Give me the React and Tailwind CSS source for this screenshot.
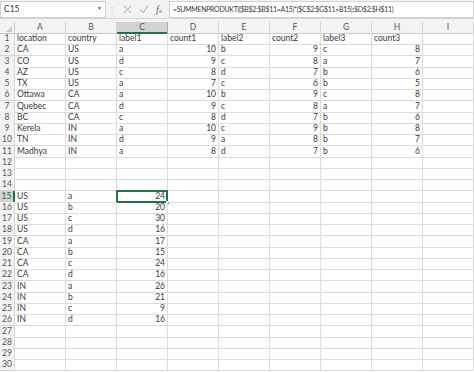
import React from 'react';

const COLS = ['A', 'B', 'C', 'D', 'E', 'F', 'G', 'H', 'I'];

const TOP = [
  ['location', 'country', 'label1', 'count1', 'label2', 'count2', 'label3', 'count3'],
  ['CA', 'US', 'a', 10, 'b', 9, 'c', 8],
  ['CO', 'US', 'd', 9, 'c', 8, 'a', 7],
  ['AZ', 'US', 'c', 8, 'd', 7, 'b', 6],
  ['TX', 'US', 'a', 7, 'c', 6, 'b', 5],
  ['Ottawa', 'CA', 'a', 10, 'b', 9, 'c', 8],
  ['Quebec', 'CA', 'd', 9, 'c', 8, 'a', 7],
  ['BC', 'CA', 'c', 8, 'd', 7, 'b', 6],
  ['Kerela', 'IN', 'a', 10, 'c', 9, 'b', 8],
  ['TN', 'IN', 'd', 9, 'a', 8, 'b', 7],
  ['Madhya', 'IN', 'a', 8, 'd', 7, 'b', 6],
];

const RESULTS = [
  ['US', 'a', 24], ['US', 'b', 20], ['US', 'c', 30], ['US', 'd', 16],
  ['CA', 'a', 17], ['CA', 'b', 15], ['CA', 'c', 24], ['CA', 'd', 16],
  ['IN', 'a', 26], ['IN', 'b', 21], ['IN', 'c', 9], ['IN', 'd', 16],
];

function rowData(n) {
  if (n <= 11) return TOP[n - 1];
  if (n >= 15 && n <= 26) return RESULTS[n - 15];
  return [];
}

function Cell({ value, selected }) {
  const isNum = typeof value === 'number';
  return (
    <div className={'relative border-r border-b border-[#dcdcdc] px-[2px] leading-[11px] whitespace-nowrap ' + (isNum ? 'text-right' : 'text-left')}>
      {value}
      {selected && (
        <>
          <div className="absolute left-[-1px] top-[-1px] right-[-1px] bottom-[-1px] border-2 border-[#217346]" />
          <div className="absolute right-[-3px] bottom-[-3px] w-[4px] h-[4px] bg-[#217346] border border-white" />
        </>
      )}
    </div>
  );
}

export default function App() {
  const rows = Array.from({ length: 30 }, (_, i) => i + 1);
  return (
    <div className="w-[474px] h-[372px] overflow-hidden bg-white text-[8.5px] text-[#3a3a3a]" style={{ fontFamily: 'Lato, "Open Sans", sans-serif' }}>
      {/* Formelleiste */}
      <div className="flex items-center h-[19px] bg-[#f3f3f3] border-b border-[#d4d4d4]">
        <div className="flex items-center justify-between w-[106px] h-[17px] bg-white border border-[#d0d0d0] px-[3px] text-[8.5px]">
          <span>C15</span>
          <span className="text-[5px] text-[#555]">▼</span>
        </div>
        <span className="w-[12px] text-center text-[#aaa] text-[8px]">⋮</span>
        <div className="flex items-center gap-[7px] px-[5px]">
          <svg width="9" height="9" viewBox="0 0 10 10" stroke="#a0a0a0" strokeWidth="1" fill="none"><path d="M1 1 L9 9 M9 1 L1 9" /></svg>
          <svg width="10" height="9" viewBox="0 0 10 10" stroke="#a0a0a0" strokeWidth="1" fill="none"><path d="M1 5 L4 8.5 L9.5 1" /></svg>
          <span className="italic text-[10px] text-[#666]" style={{ fontFamily: '"Liberation Serif", serif' }}>f<span className="text-[7px]">x</span></span>
        </div>
        <div className="flex-1 h-[17px] bg-white border border-[#d0d0d0] ml-[2px] px-[3px] leading-[15px] whitespace-nowrap overflow-hidden text-[7px] tracking-[-0.3px]">
          =SUMMENPRODUKT(($B$2:$B$11=A15)*($C$2:$G$11=B15);$D$2:$H$11)
        </div>
      </div>
      <div className="h-[3px] bg-[#f3f3f3]" />

      {/* Spaltenköpfe */}
      <div className="grid grid-cols-[15px_repeat(9,51px)] h-[11px] bg-[#f3f3f3] text-[#555]">
        <div className="relative border-r border-b border-[#c9c9c9]">
          <div className="absolute right-[2px] bottom-[1px] w-0 h-0 border-l-[6px] border-l-transparent border-b-[6px] border-b-[#c8c8c8]" />
        </div>
        {COLS.map(c => (
          <div key={c} className={'text-center leading-[10px] border-r ' + (c === 'C' ? 'bg-[#d2d2d2] border-[#ababab] border-b-2 border-b-[#217346]' : 'border-[#d4d4d4] border-b border-b-[#c9c9c9]')}>{c}</div>
        ))}
      </div>

      {/* Zeilen */}
      {rows.map(n => {
        const data = rowData(n);
        return (
          <div key={n} className="grid grid-cols-[15px_repeat(9,51px)] h-[11.25px]">
            <div className={'text-center leading-[11px] border-r border-b ' + (n === 15 ? 'bg-[#d2d2d2] text-[#217346] border-r-2 border-r-[#217346] border-b-[#ababab]' : 'bg-[#f3f3f3] text-[#555] border-[#d4d4d4]')}>{n}</div>
            {COLS.map((c, ci) => (
              <Cell key={c} value={data[ci]} selected={n === 15 && ci === 2} />
            ))}
          </div>
        );
      })}
    </div>
  );
}
